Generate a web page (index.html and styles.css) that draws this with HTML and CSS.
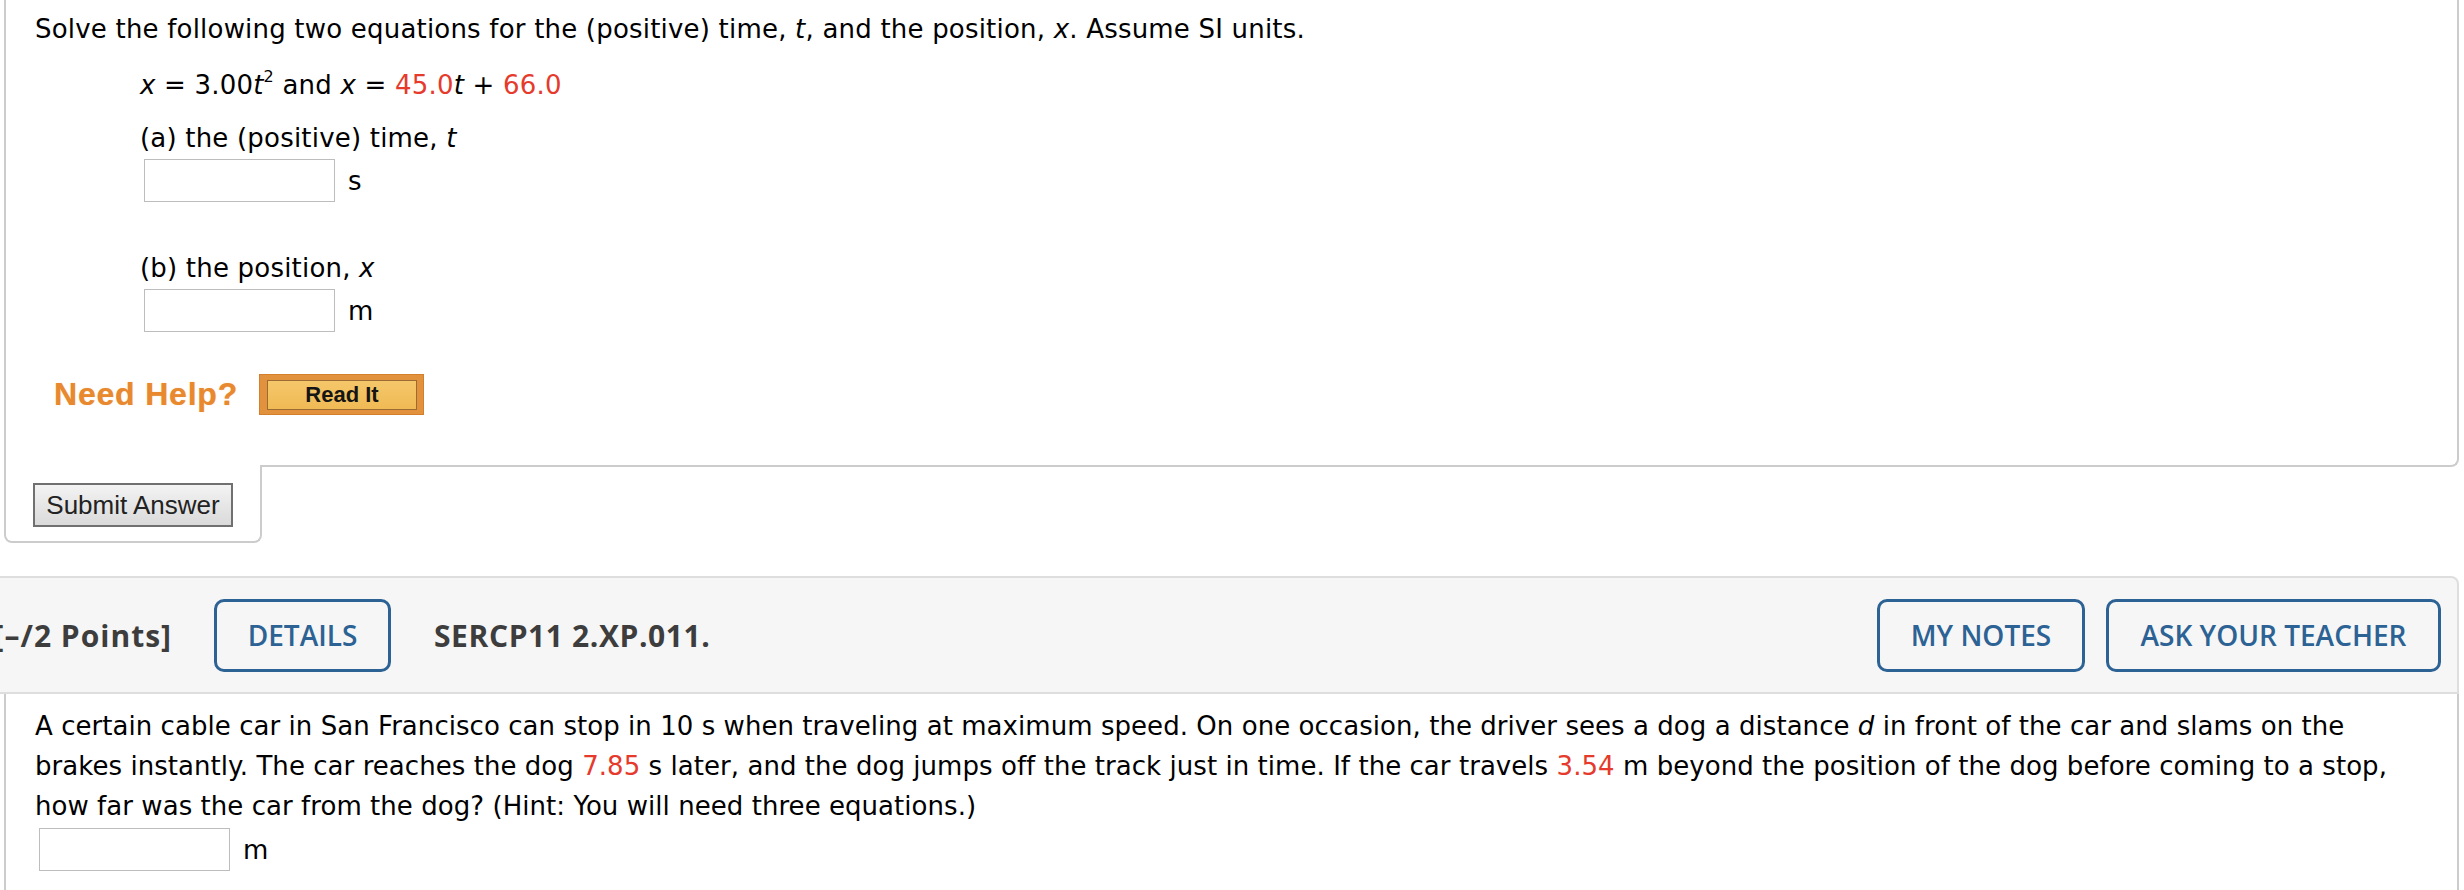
FILE: index.html
```html
<!DOCTYPE html>
<html lang="en">
<head>
<meta charset="utf-8">
<title>Question</title>
<link rel="stylesheet" href="styles.css">
</head>
<body>
<div class="page">
  <section class="q1">
    <div class="q1-main">
      <p class="lead">Solve the following two equations for the (positive) time, <i>t</i>, and the position, <i>x</i>. Assume SI units.</p>
      <div class="indent">
        <p class="eq"><i>x</i> = 3.00<i>t</i><sup>2</sup> and <i>x</i> = <span class="red">45.0</span><i>t</i> + <span class="red">66.0</span></p>
        <p class="part">(a) the (positive) time, <i>t</i></p>
        <div class="answer"><input class="field" type="text"><span class="unit">s</span></div>
        <p class="part part-b">(b) the position, <i>x</i></p>
        <div class="answer"><input class="field" type="text"><span class="unit">m</span></div>
      </div>
      <div class="help">
        <span class="need">Need Help?</span>
        <span class="readit"><span class="readit-in">Read It</span></span>
      </div>
    </div>
    <div class="q1-tab"><button class="submit" type="button">Submit Answer</button></div>
  </section>

  <section class="q2">
    <header class="q2-head">
      <span class="points">[–/2 Points]</span>
      <span class="btn btn-details">DETAILS</span>
      <span class="qid">SERCP11 2.XP.011.</span>
      <span class="spacer"></span>
      <span class="btn btn-notes">MY NOTES</span>
      <span class="btn btn-ask">ASK YOUR TEACHER</span>
    </header>
    <div class="q2-body">
      <p class="q2-text">A certain cable car in San Francisco can stop in 10 s when traveling at maximum speed. On one occasion, the driver sees a dog a distance <i>d</i> in front of the car and slams on the<br>brakes instantly. The car reaches the dog <span class="red">7.85</span> s later, and the dog jumps off the track just in time. If the car travels <span class="red">3.54</span> m beyond the position of the dog before coming to a stop,<br>how far was the car from the dog? (Hint: You will need three equations.)</p>
      <div class="answer answer-q2"><input class="field" type="text"><span class="unit">m</span></div>
    </div>
  </section>
</div>
</body>
</html>
```

FILE: styles.css
```css
html, body {
  margin: 0;
  padding: 0;
  background: #ffffff;
}

body {
  font-family: "DejaVu Sans", Verdana, sans-serif;
  font-size: 26px;
  letter-spacing: 0.2px;
  color: #000000;
  overflow: hidden;
  width: 2464px;
  height: 890px;
}

p {
  margin: 0;
}

i {
  font-style: italic;
}

.red {
  color: #e53a2c;
}

/* ---------- first question card ---------- */
.q1 {
  margin: 0 5px 0 4px;
}

.q1-main {
  border: 2px solid #cccccc;
  border-top: none;
  border-bottom-right-radius: 8px;
  padding: 14px 0 50px 29px;
}

.lead {
  line-height: 30px;
}

.indent {
  padding-left: 105px;
}

.eq {
  margin-top: 26px;
  line-height: 30px;
}

.eq sup {
  font-size: 16px;
  line-height: 0;
  vertical-align: 12px;
}

.part {
  margin-top: 23px;
  line-height: 30px;
}

.part-b {
  margin-top: 51px;
}

.answer {
  margin-top: 6px;
  display: flex;
  align-items: center;
  height: 43px;
}

.field {
  box-sizing: border-box;
  width: 191px;
  height: 43px;
  margin: 0 0 0 4px;
  padding: 0;
  border: 1px solid #bdbdbd;
  background: #ffffff;
  outline: none;
}

.unit {
  margin-left: 13px;
  line-height: 30px;
}

.help {
  margin-top: 42px;
  display: flex;
  align-items: center;
  height: 41px;
}

.need {
  margin-left: 19px;
  font-family: "Liberation Sans", Arial, sans-serif;
  font-weight: bold;
  font-size: 32px;
  letter-spacing: 0.8px;
  color: #e8892f;
  text-shadow: 0 0 1px rgba(232, 137, 47, 0.6);
}

.readit {
  margin-left: 21px;
  box-sizing: border-box;
  width: 165px;
  height: 41px;
  padding: 6px 7px 5px 8px;
  display: flex;
  background: #e2913c;
  box-shadow: inset 0 0 0 1px #d47f2c;
}

.readit-in {
  flex: 1;
  display: flex;
  align-items: center;
  justify-content: center;
  border: 1px solid #9b6b33;
  background: linear-gradient(#f5c76a, #f0ba55);
  font-family: "Liberation Sans", Arial, sans-serif;
  font-weight: bold;
  font-size: 22px;
  letter-spacing: 0;
  color: #151515;
}

.q1-tab {
  box-sizing: border-box;
  width: 258px;
  margin-top: -2px;
  background: #ffffff;
  border: 2px solid #cccccc;
  border-top: none;
  border-radius: 0 0 8px 8px;
  padding: 18px 0 14px 27px;
}

.submit {
  display: block;
  box-sizing: border-box;
  width: 200px;
  height: 44px;
  padding: 0;
  border: 2px solid #707070;
  background: linear-gradient(#f3f3f3, #dadada);
  font-family: "Liberation Sans", Arial, sans-serif;
  font-size: 26px;
  letter-spacing: 0;
  color: #222222;
}

/* ---------- second question card ---------- */
.q2 {
  margin: 33px 5px 0 4px;
}

.q2-head {
  box-sizing: border-box;
  height: 118px;
  margin-left: -44px;
  padding: 0 16px 0 41px;
  display: flex;
  align-items: center;
  background: #f6f6f6;
  border: 2px solid #dedede;
  border-left: none;
  border-radius: 0 8px 0 0;
  font-family: "Open Sans", sans-serif;
  letter-spacing: 0;
  color: #3d3d3d;
}

.points {
  width: 171px;
  display: flex;
  justify-content: flex-end;
  white-space: nowrap;
  font-weight: 700;
  font-size: 30px;
  letter-spacing: 1px;
}

.btn {
  box-sizing: border-box;
  height: 73px;
  display: flex;
  align-items: center;
  justify-content: center;
  border: 3px solid #2c6294;
  border-radius: 10px;
  font-weight: 600;
  font-size: 28px;
  color: #2c6294;
  white-space: nowrap;
}

.btn-details {
  margin-left: 42px;
  width: 177px;
}

.qid {
  margin-left: 43px;
  font-weight: 700;
  font-size: 30px;
  letter-spacing: 0.6px;
  white-space: nowrap;
}

.spacer {
  flex: 1;
}

.btn-notes {
  width: 208px;
}

.btn-ask {
  margin-left: 21px;
  width: 335px;
}

.q2-body {
  border: 2px solid #cccccc;
  border-top: none;
  padding: 12px 16px 30px 29px;
}

.q2-text {
  line-height: 40px;
  letter-spacing: 0.05px;
  white-space: nowrap;
}

.answer-q2 {
  margin-top: 2px;
}
```
